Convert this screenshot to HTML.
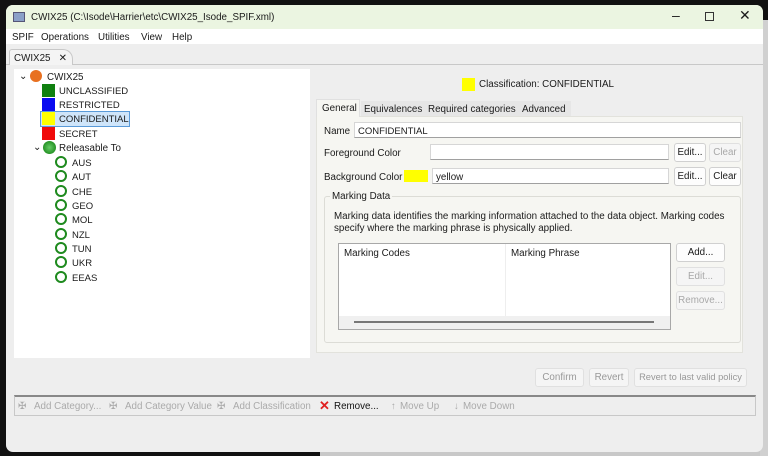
<!DOCTYPE html>
<html><head><style>
*{box-sizing:border-box;margin:0;padding:0}
body{width:768px;height:456px;background:#111;position:relative;overflow:hidden;font-family:"Liberation Sans",sans-serif;font-size:9.8px;color:#1a1a1a}
.a{position:absolute}
.win{left:6px;top:5px;width:757px;height:447px;background:#eeeeee;border-radius:7px;overflow:hidden}
.t{position:absolute;white-space:nowrap;line-height:13px}
.c{font-size:9.5px}
.btn{position:absolute;background:#fdfdfd;border:1px solid #d0d0d0;border-radius:3px;text-align:center;line-height:17px;white-space:nowrap}
.dis{color:#a8a8a8;background:#f5f5f5;border-color:#e0e0e0}
.inp{position:absolute;background:#fff;border:1px solid #d6d6d6;border-bottom-color:#a0a0a0}
.sq{position:absolute;width:13px;height:13px}
.ring{position:absolute;width:12px;height:12px;border-radius:50%;border:2.5px solid #1e8a1e}
.g{color:#aaa}
</style></head><body>
<div class="a" style="left:320px;top:440px;width:448px;height:16px;background:#c8c8c8"></div>
<div class="a" style="left:760px;top:20px;width:8px;height:436px;background:#d0d0d0"></div>
<div class="a win">
 <div class="a" style="left:0;top:0;width:757px;height:24px;background:#ebf5e1"></div>
 <div class="a" style="left:7px;top:7px;width:12px;height:10px;background:#8aa0c8;border:1px solid #557"></div>
 <div class="t" style="left:25px;top:6px;font-size:9.8px">CWIX25 (C:\Isode\Harrier\etc\CWIX25_Isode_SPIF.xml)</div>
 <div class="t" style="left:666px;top:4px;font-size:14px">&#8211;</div>
 <div class="a" style="left:699px;top:7px;width:9px;height:9px;border:1px solid #333"></div>
 <div class="t" style="left:733px;top:4px;font-size:14px">&#10005;</div>
 <div class="a" style="left:0;top:24px;width:757px;height:15px;background:#fff"></div>
 <div class="t" style="left:6px;top:26px">SPIF</div>
 <div class="t" style="left:35px;top:26px">Operations</div>
 <div class="t" style="left:92px;top:26px">Utilities</div>
 <div class="t" style="left:135px;top:26px">View</div>
 <div class="t" style="left:166px;top:26px">Help</div>
 <div class="a" style="left:0;top:59px;width:757px;height:1px;background:#c8c8c8"></div>
 <div class="a" style="left:3px;top:44px;width:64px;height:16px;background:#f4f4f4;border:1px solid #c8c8c8;border-bottom:none;border-radius:3px 10px 0 0"></div>
 <div class="t" style="left:8px;top:47px">CWIX25 &nbsp;&nbsp;&#10005;</div>
 <div class="a" style="left:8px;top:64px;width:296px;height:289px;background:#fff"></div>
 <div class="t" style="left:13px;top:65px;font-size:10px">&#8964;</div>
 <div class="a" style="left:24px;top:65px;width:12px;height:12px;border-radius:50%;background:#e87020"></div>
 <div class="t" style="left:41px;top:66px">CWIX25</div>
 <div class="sq" style="left:36px;top:79px;background:#108010"></div><div class="t c" style="left:53px;top:80px">UNCLASSIFIED</div>
 <div class="sq" style="left:36px;top:93px;background:#0a0af0"></div><div class="t c" style="left:53px;top:94px">RESTRICTED</div>
 <div class="a" style="left:34px;top:106px;width:90px;height:16px;background:#cfe5fa;border:1px solid #5a9ad8"></div>
 <div class="sq" style="left:36px;top:107px;background:#ffff00"></div><div class="t c" style="left:53px;top:108px">CONFIDENTIAL</div>
 <div class="sq" style="left:36px;top:122px;background:#f00a0a"></div><div class="t c" style="left:53px;top:123px">SECRET</div>
 <div class="t" style="left:27px;top:136px;font-size:10px">&#8964;</div>
 <div class="a" style="left:37px;top:136px;width:13px;height:13px;border-radius:50%;background:radial-gradient(#6c6,#0a7a0a)"></div>
 <div class="t" style="left:53px;top:137px">Releasable To</div>
 <div class="ring" style="left:49px;top:151px"></div><div class="t c" style="left:66px;top:152px">AUS</div>
 <div class="ring" style="left:49px;top:165px"></div><div class="t c" style="left:66px;top:166px">AUT</div>
 <div class="ring" style="left:49px;top:180px"></div><div class="t c" style="left:66px;top:181px">CHE</div>
 <div class="ring" style="left:49px;top:194px"></div><div class="t c" style="left:66px;top:195px">GEO</div>
 <div class="ring" style="left:49px;top:208px"></div><div class="t c" style="left:66px;top:209px">MOL</div>
 <div class="ring" style="left:49px;top:223px"></div><div class="t c" style="left:66px;top:224px">NZL</div>
 <div class="ring" style="left:49px;top:237px"></div><div class="t c" style="left:66px;top:238px">TUN</div>
 <div class="ring" style="left:49px;top:251px"></div><div class="t c" style="left:66px;top:252px">UKR</div>
 <div class="ring" style="left:49px;top:266px"></div><div class="t c" style="left:66px;top:267px">EEAS</div>
 <div class="sq" style="left:456px;top:73px;background:#ffff00"></div>
 <div class="t" style="left:473px;top:73px">Classification: CONFIDENTIAL</div>
 <div class="a" style="left:310px;top:111px;width:427px;height:237px;background:#f6f6f2;border:1px solid #e2e2dc"></div>
 <div class="a" style="left:310px;top:94px;width:44px;height:18px;background:#f6f6f2;border:1px solid #e0e0e0;border-bottom:none"></div>
 <div class="t" style="left:316px;top:97px">General</div>
 <div class="a" style="left:355px;top:96px;width:210px;height:15px;background:#e6e6e6"></div>
 <div class="t" style="left:358px;top:98px">Equivalences</div>
 <div class="t" style="left:422px;top:98px">Required categories</div>
 <div class="t" style="left:516px;top:98px">Advanced</div>
 <div class="t" style="left:318px;top:120px">Name</div>
 <div class="inp" style="left:348px;top:117px;width:387px;height:16px"></div>
 <div class="t c" style="left:352px;top:120px">CONFIDENTIAL</div>
 <div class="t" style="left:318px;top:142px">Foreground Color</div>
 <div class="inp" style="left:424px;top:139px;width:239px;height:16px"></div>
 <div class="btn" style="left:668px;top:138px;width:32px;height:19px">Edit...</div>
 <div class="btn dis" style="left:703px;top:138px;width:32px;height:19px">Clear</div>
 <div class="t" style="left:318px;top:166px">Background Color</div>
 <div class="a" style="left:398px;top:165px;width:24px;height:12px;background:#ffff00"></div>
 <div class="inp" style="left:426px;top:163px;width:237px;height:16px"></div>
 <div class="t" style="left:430px;top:166px">yellow</div>
 <div class="btn" style="left:668px;top:162px;width:32px;height:19px">Edit...</div>
 <div class="btn" style="left:703px;top:162px;width:32px;height:19px">Clear</div>
 <div class="a" style="left:318px;top:191px;width:417px;height:147px;border:1px solid #dcdcd6;border-radius:3px"></div>
 <div class="t" style="left:324px;top:185px;background:#f6f6f2;padding:0 2px">Marking Data</div>
 <div class="t" style="left:328px;top:205px">Marking data identifies the marking information attached to the data object. Marking codes</div>
 <div class="t" style="left:328px;top:217px">specify where the marking phrase is physically applied.</div>
 <div class="a" style="left:332px;top:238px;width:333px;height:87px;background:#fff;border:1px solid #a8a8a8"></div>
 <div class="a" style="left:499px;top:239px;width:1px;height:72px;background:#eee"></div>
 <div class="a" style="left:333px;top:311px;width:331px;height:13px;background:#f0f0f0"></div>
 <div class="a" style="left:348px;top:316px;width:300px;height:2px;background:#777"></div>
 <div class="t" style="left:338px;top:242px">Marking Codes</div>
 <div class="t" style="left:505px;top:242px">Marking Phrase</div>
 <div class="btn" style="left:670px;top:238px;width:49px;height:19px">Add...</div>
 <div class="btn dis" style="left:670px;top:262px;width:49px;height:19px">Edit...</div>
 <div class="btn dis" style="left:670px;top:286px;width:49px;height:19px">Remove...</div>
 <div class="btn dis" style="left:529px;top:363px;width:49px;height:19px;color:#999">Confirm</div>
 <div class="btn dis" style="left:583px;top:363px;width:40px;height:19px;color:#999">Revert</div>
 <div class="btn dis" style="left:628px;top:363px;width:113px;height:19px;color:#999;font-size:9.3px">Revert to last valid policy</div>
 <div class="a" style="left:8px;top:390px;width:742px;height:21px;border:1px solid #c8c8c8;border-top:2px solid #888"></div>
 <div class="t g" style="left:12px;top:395px">&#10016;</div><div class="t g" style="left:28px;top:395px">Add Category...</div>
 <div class="t g" style="left:103px;top:395px">&#10016;</div><div class="t g" style="left:119px;top:395px">Add Category Value</div>
 <div class="t g" style="left:211px;top:395px">&#10016;</div><div class="t g" style="left:227px;top:395px">Add Classification</div>
 <div class="t" style="left:313px;top:394px;color:#e02020;font-size:13px;font-weight:bold">&#10005;</div>
 <div class="t" style="left:328px;top:395px;color:#111">Remove...</div>
 <div class="t g" style="left:385px;top:395px">&#8593;</div><div class="t g" style="left:394px;top:395px">Move Up</div>
 <div class="t g" style="left:448px;top:395px">&#8595;</div><div class="t g" style="left:457px;top:395px">Move Down</div>
</div>
</body></html>
